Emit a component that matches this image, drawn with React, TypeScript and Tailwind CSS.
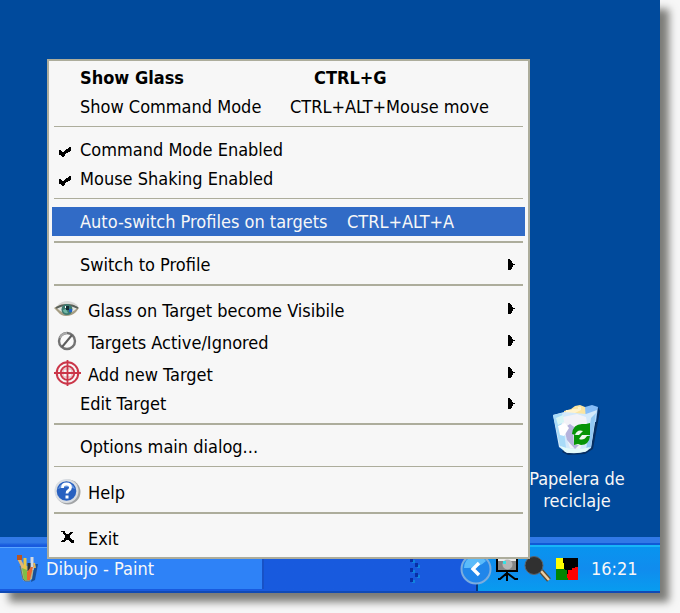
import { ReactNode } from "react";

interface MenuItem {
  label: string;
  shortcut?: string;
  labelWidth?: string;
  icon?: ReactNode;
  bold?: boolean;
  checked?: boolean;
  active?: boolean;
  submenu?: boolean;
  tall?: boolean;
}

interface MenuGroup {
  items: MenuItem[];
  thinRule?: boolean;
}

function CheckIcon() {
  return (
    <svg width="16" height="16" viewBox="0 0 16 16" aria-hidden="true">
      <path d="M1 8h2v1h1v1h2V9h1V8h1V7h2V6h1V5h2v4h-1v1h-2v1H8v1H7v2H6v1H4v-1H3v-1H1z" fill="#000" shapeRendering="crispEdges" />
    </svg>
  );
}

function ArrowIcon() {
  return (
    <svg width="7" height="12" viewBox="0 0 7 12" aria-hidden="true">
      <path d="M0 0h2v1h1v1h1v2h1v1h2v1H5v2H4v2H3v1H0z" fill="currentColor" shapeRendering="crispEdges" />
    </svg>
  );
}

function EyeIcon() {
  return (
    <svg width="26" height="18" viewBox="0 0 26 18" aria-hidden="true">
      <path d="M3 6Q7 1 14 1q7 1 10 5l-2 3H3z" fill="#d8d8d6" />
      <path d="M0 8q6-4 13-4t12 4l-3 4q-4 4-10 4-5 0-8-4z" fill="#a59d84" />
      <path d="M3 8q5-3 10-3t10 3q-4 5-10 5T3 8z" fill="#e2e4e0" />
      <path d="M2 8q5-3 11-3t11 3" fill="none" stroke="#59605a" strokeWidth="2" />
      <circle cx="13" cy="9.5" r="5.5" fill="#3d7a70" />
      <path d="M9 10q1 4 5 3l-2-4z" fill="#70b7a4" />
      <rect x="12" y="6" width="3" height="4" fill="#122b32" />
      <rect x="15" y="9" width="3" height="3" fill="#1d62c8" />
      <rect x="11" y="6" width="1" height="2" fill="#fff" />
    </svg>
  );
}

function IgnoredIcon() {
  return (
    <svg width="22" height="22" viewBox="0 0 22 22" aria-hidden="true">
      <circle cx="11" cy="11" r="8" fill="#fafafa" stroke="#737373" strokeWidth="2.4" />
      <path d="M6 17L16 5" stroke="#5e5e5e" strokeWidth="2" />
      <path d="M4 8a8 8 0 0 1 7-5" fill="none" stroke="#aaa" strokeWidth="2" />
    </svg>
  );
}

function TargetIcon() {
  return (
    <svg width="27" height="26" viewBox="0 0 27 26" fill="none" stroke="#cb3649" aria-hidden="true">
      <path d="M9 9h9v8H9z" stroke="#e2a0a6" strokeWidth="1" />
      <circle cx="13.5" cy="13" r="10.8" strokeWidth="2" />
      <circle cx="13.5" cy="13" r="6.8" strokeWidth="1.8" />
      <path d="M0 13h27M13.5 0v26" strokeWidth="1.8" />
    </svg>
  );
}

function HelpIcon() {
  return (
    <svg width="27" height="27" viewBox="0 0 27 27" aria-hidden="true">
      <circle cx="14" cy="14" r="12.5" fill="#a2a4a6" />
      <circle cx="12.5" cy="13" r="12" fill="#d9dde2" />
      <circle cx="12.5" cy="13" r="9.8" fill="#2860c0" />
      <path d="M4 11a9 9 0 0 1 17 0q-8-4-17 0z" fill="#6797df" />
      <path d="M8.5 10q0-4 4-4t4 3.5q0 2-2.2 3.2-1.3.8-1.3 2.8" fill="none" stroke="#fff" strokeWidth="2.8" />
      <rect x="11.5" y="17.5" width="3" height="3" fill="#fff" />
    </svg>
  );
}

function ExitIcon() {
  return (
    <svg width="13" height="12" viewBox="0 0 13 12" aria-hidden="true">
      <path d="M0 0h4v2h1v1h3V2h1V1h3v1h-1v1h-1v1H9v3h1v1h1v1h2v3h-3v-1H9v-1H8V9H5v1H4v1H0v-1h1V9h2V7h1V4H3V3H2V1H0z" fill="#000" shapeRendering="crispEdges" />
    </svg>
  );
}

function RecycleBinIcon() {
  return (
    <svg width="50" height="52" viewBox="0 0 50 52" aria-hidden="true">
      <path d="M40 3h6l2 4-7 38-8 5-17 1-6-3z" fill="#062f63" />
      <path d="M33 3l7-2 6 2-2 15H32z" fill="#86bdf8" />
      <path d="M12 7l7-2 4-3 5-1 5 2 1 14H12z" fill="#fbe5a1" />
      <path d="M14 6h6V5h6V3h3v3l-8 4h-7z" fill="#fff3cc" />
      <path d="M1 11l11-3 22 2 11-4-6 38-6 4-18 1-8-6z" fill="#d3e9fb" />
      <path d="M1 11l9-2 2 9 10 6-10 3 2 17-6-2z" fill="#a8dbf8" />
      <path d="M11 13l14-3 9 3 2 12-8 20-10-1-4-12-6-4z" fill="#f2f2f7" />
      <path d="M12 24l6-4 7 5-3 8 5 8-4 4-8-9z" fill="#b5b3dc" />
      <path d="M4 14l7-3 1 7-6 3z" fill="#d6f6f5" />
      <path d="M6 22l7-3 4 5-5 8-4-1z" fill="#fff" />
      <path d="M39 14l5-5-5 34-5 3z" fill="#92c8f3" />
      <path d="M8 42q14 6 30 1l-3 4q-12 4-22 1z" fill="#e3fbfa" />
      <path d="M21 27l7-6h9l-1 17-6 3h-8z" fill="#eef8f0" />
      <g fill="#079407">
        <path d="M20 30q1-10 10-10h4l4-1v12H27l4-4q-6-2-8 4z" />
        <path d="M38 32q-1 9-9 9l-3-1-4 1V31h8l-3 4q5 2 8-3z" />
      </g>
    </svg>
  );
}

function PaintIcon() {
  return (
    <svg width="22" height="28" viewBox="0 0 22 28" aria-hidden="true">
      <path d="M17 9h4l-3 16-4 2z" fill="#174f9b" />
      <path d="M4 10l13 2-2 12-3 2H7l-2-3z" fill="#b3b790" />
      <path d="M2 4l5 10" stroke="#e2b774" strokeWidth="3" />
      <rect x="0" y="0" width="5" height="5" fill="#b85421" />
      <path d="M8 3v13" stroke="#e9c642" strokeWidth="3" />
      <path d="M15 2v13" stroke="#d5d9e1" strokeWidth="3" />
      <path d="M12 8v8" stroke="#28343c" strokeWidth="3" />
      <path d="M5 13l5 2v10H7z" fill="#7fbe45" />
      <path d="M10 17l4-5h2l-3 13h-3z" fill="#e96830" />
      <path d="M3 11l3 13 2 2h5" fill="none" stroke="#69736a" />
      <path d="M17 8l1 5" stroke="#e7b653" strokeWidth="2" />
    </svg>
  );
}

function CollapseIcon() {
  return (
    <svg width="32" height="32" viewBox="0 0 32 32" aria-hidden="true">
      <circle cx="16" cy="16" r="14.5" fill="#2086ea" stroke="#7badde" strokeWidth="2" />
      <path d="M4 15A12 12 0 0 1 26 8q-8 8-22 7z" fill="#5bbbfa" />
      <path d="M19 10l-6 6 6 6" fill="none" stroke="#fff" strokeWidth="3.4" />
    </svg>
  );
}

function CameraIcon() {
  return (
    <svg width="24" height="24" viewBox="0 0 24 24" aria-hidden="true">
      <path d="M1 0h22v15H1z" fill="#000" />
      <path d="M3 2h18v11H3z" fill="#858585" />
      <path d="M3 0h18v4H3z" fill="#e8e8e8" />
      <circle cx="12.5" cy="7.5" r="5" fill="#b5b5b5" />
      <rect x="8" y="4" width="3" height="3" fill="#35e1e5" />
      <path d="M12 13v11M12 16l-7 6H3M12 16l8 6h3" fill="none" stroke="#000" strokeWidth="2" />
    </svg>
  );
}

function MagnifierIcon() {
  return (
    <svg width="27" height="26" viewBox="0 0 27 26" aria-hidden="true">
      <path d="M17 15l8 9" stroke="#5b4a34" strokeWidth="5" />
      <path d="M17 15l8 9" stroke="#edcfa1" strokeWidth="2.5" />
      <circle cx="10" cy="9.5" r="9" fill="#303030" stroke="#5d6268" />
    </svg>
  );
}

function FlagIcon() {
  return (
    <svg width="22" height="22" viewBox="0 0 22 22" shapeRendering="crispEdges" aria-hidden="true">
      <path d="M0 0h22v22H0z" fill="#000" />
      <path d="M0 0h7v5h1v6H0z" fill="#ffff00" />
      <path d="M0 11h9v1h2v4h1v6H0z" fill="#008400" />
      <path d="M22 9h-3v1h-3v2h-4v4h-1v4h1v2h10z" fill="#ff0000" />
    </svg>
  );
}

const groups: MenuGroup[] = [
  {
    thinRule: true,
    items: [
      { label: "Show Glass", shortcut: "CTRL+G", labelWidth: "w-[234px]", bold: true },
      { label: "Show Command Mode", shortcut: "CTRL+ALT+Mouse move", labelWidth: "w-[210px]" },
    ],
  },
  {
    thinRule: true,
    items: [
      { label: "Command Mode Enabled", checked: true },
      { label: "Mouse Shaking Enabled", checked: true },
    ],
  },
  { items: [{ label: "Auto-switch Profiles on targets", shortcut: "CTRL+ALT+A", labelWidth: "w-[267px]", active: true }] },
  { items: [{ label: "Switch to Profile", submenu: true }] },
  {
    items: [
      { label: "Glass on Target become Visibile", icon: <EyeIcon />, submenu: true, tall: true },
      { label: "Targets Active/Ignored", icon: <IgnoredIcon />, submenu: true, tall: true },
      { label: "Add new Target", icon: <TargetIcon />, submenu: true, tall: true },
      { label: "Edit Target", submenu: true },
    ],
  },
  { thinRule: true, items: [{ label: "Options main dialog..." }] },
  { items: [{ label: "Help", icon: <HelpIcon />, tall: true }] },
  { items: [{ label: "Exit", icon: <ExitIcon />, tall: true }] },
];

function MenuRow({ item }: { item: MenuItem }) {
  return (
    <button
      type="button"
      role="menuitem"
      className={`flex w-full items-center pr-[10px] text-left whitespace-nowrap ${item.tall ? "h-8" : "h-[29px]"} ${
        item.active ? "bg-[#316bc6] text-[#f7f7f7]" : "text-black"
      } ${item.bold ? "font-bold" : ""}`}
    >
      <span className={`flex shrink-0 items-center justify-center ${item.tall ? "mr-[6px] w-[30px]" : "w-7"}`}>
        {item.checked ? <CheckIcon /> : item.icon}
      </span>
      <span className={`shrink-0 ${item.labelWidth ?? ""} ${item.tall ? "pt-1" : ""}`}>{item.label}</span>
      {item.shortcut && <span>{item.shortcut}</span>}
      {item.submenu && (
        <span className="ml-auto">
          <ArrowIcon />
        </span>
      )}
    </button>
  );
}

function ContextMenu() {
  return (
    <div
      role="menu"
      className="absolute top-[59px] left-[47px] z-10 w-[483px] border-2 border-[#adad9c] bg-[#f7f7f7] px-[3px] pt-[2px] pb-1"
    >
      {groups.map((group, i) => (
        <div key={i}>
          {group.items.map((item) => (
            <MenuRow key={item.label} item={item} />
          ))}
          {i < groups.length - 1 && (
            <div className="h-[14px] px-[2px] pt-[5px]">
              <div className={`bg-[#adad9c] ${group.thinRule ? "h-px" : "h-[2px]"}`} />
            </div>
          )}
        </div>
      ))}
    </div>
  );
}

function Taskbar() {
  return (
    <footer className="flex h-14 border-b-2 border-[#104ab5] bg-linear-to-b from-[#3179e7] from-10% via-[#185ade] via-15% to-[#185ade] text-[#f7f7f7]">
      <div className="flex flex-1 items-start pt-[10px]">
        <button
          type="button"
          className="flex h-[42px] w-[264px] items-center gap-[7px] border-t border-r-2 border-t-[#5aa5ff] border-r-[#1852c6] bg-[#2e82f7] pl-[17px]"
        >
          <PaintIcon />
          Dibujo - Paint
        </button>
      </div>
      <div className="flex w-[50px] items-center pt-2">
        <svg width="10" height="30" viewBox="0 0 10 30" shapeRendering="crispEdges" aria-hidden="true">
          <path d="M7 2h3v3H7zM2 7h3v3H2zM7 12h3v3H7zM2 17h3v3H2zM7 22h3v3H7zM2 27h3v3H2z" fill="#1084de" />
          <path d="M5 0h3v4H5zM0 5h3v4H0zM5 10h3v4H5zM0 15h3v4H0zM5 20h3v4H5zM0 25h3v4H0z" fill="#0831a5" />
        </svg>
      </div>
      <div className="flex w-[200px] flex-col">
        <div className="h-[6px] bg-[#3179e7]" />
        <div className="h-[2px] bg-[#105ad6]" />
        <div className="flex flex-1">
          <div className="w-4" />
          <div className="flex flex-1 items-center border-t-2 border-l-2 border-t-[#18b5f7] border-l-[#08397b] bg-linear-to-b from-[#0894ef] via-[#108cee] to-[#089cef]">
            <button type="button" aria-label="Hide icons" className="-ml-[18px]">
              <CollapseIcon />
            </button>
            <div className="ml-[3px] flex items-center gap-[5px]">
              <CameraIcon />
              <MagnifierIcon />
              <FlagIcon />
            </div>
            <span className="ml-[13px]">16:21</span>
          </div>
        </div>
      </div>
    </footer>
  );
}

export default function App() {
  return (
    <div className="flex min-h-screen bg-[#f7f7f7] pr-5 pb-5 font-['DejaVu_Sans_Condensed','DejaVu_Sans',sans-serif] text-lg leading-[22px]">
      <div className="relative flex flex-1 flex-col bg-[#004a9c] shadow-[9px_9px_8px_#7c7c78]">
        <main className="flex-1">
          <ContextMenu />
          <div className="absolute top-[404px] right-[35px] flex w-24 flex-col items-center text-center text-[#f7f7f7]">
            <RecycleBinIcon />
            <span className="mt-3 whitespace-nowrap">
              Papelera de
              <br />
              reciclaje
            </span>
          </div>
        </main>
        <Taskbar />
      </div>
    </div>
  );
}
